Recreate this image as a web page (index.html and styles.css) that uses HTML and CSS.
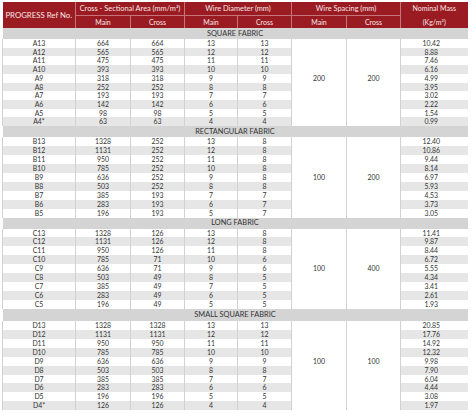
FILE: index.html
```html
<!DOCTYPE html>
<html>
<head>
<meta charset="utf-8">
<link rel="stylesheet" href="styles.css">
</head>
<body>
<div class="wrap">
<table class="mesh">
<colgroup>
<col class="c1"><col class="c2"><col class="c3"><col class="c4"><col class="c5"><col class="c6"><col class="c7"><col class="c8">
</colgroup>
<thead>
<tr class="h1">
<th rowspan="2" class="ref">PROGRESS Ref No.</th>
<th colspan="2" class="grp">Cross - Sectional Area (mm/m²)</th>
<th colspan="2" class="grp">Wire Diameter (mm)</th>
<th colspan="2" class="grp">Wire Spacing (mm)</th>
<th rowspan="2" class="nm"><div class="nm1">Nominal Mass</div><div class="nm2">(Kg/m²)</div></th>
</tr>
<tr class="h2">
<th>Main</th><th>Cross</th><th>Main</th><th>Cross</th><th>Main</th><th>Cross</th>
</tr>
</thead>
<tbody class="sec sa">
<tr class="band"><td colspan="8">SQUARE FABRIC</td></tr>
<tr><td>A13</td><td>664</td><td>664</td><td>13</td><td>13</td><td class="sp"></td><td class="sp"></td><td class="m">10.42</td></tr>
<tr class="g"><td>A12</td><td>565</td><td>565</td><td>12</td><td>12</td><td class="sp"></td><td class="sp"></td><td class="m">8.88</td></tr>
<tr><td>A11</td><td>475</td><td>475</td><td>11</td><td>11</td><td class="sp"></td><td class="sp"></td><td class="m">7.46</td></tr>
<tr class="g"><td>A10</td><td>393</td><td>393</td><td>10</td><td>10</td><td class="sp"></td><td class="sp"></td><td class="m">6.16</td></tr>
<tr><td>A9</td><td>318</td><td>318</td><td>9</td><td>9</td><td class="sp">200</td><td class="sp">200</td><td class="m">4.99</td></tr>
<tr class="g"><td>A8</td><td>252</td><td>252</td><td>8</td><td>8</td><td class="sp"></td><td class="sp"></td><td class="m">3.95</td></tr>
<tr><td>A7</td><td>193</td><td>193</td><td>7</td><td>7</td><td class="sp"></td><td class="sp"></td><td class="m">3.02</td></tr>
<tr class="g"><td>A6</td><td>142</td><td>142</td><td>6</td><td>6</td><td class="sp"></td><td class="sp"></td><td class="m">2.22</td></tr>
<tr><td>A5</td><td>98</td><td>98</td><td>5</td><td>5</td><td class="sp"></td><td class="sp"></td><td class="m">1.54</td></tr>
<tr class="g"><td>A4*</td><td>63</td><td>63</td><td>4</td><td>4</td><td class="sp"></td><td class="sp"></td><td class="m">0.99</td></tr>
</tbody>
<tbody class="sec sb">
<tr class="band"><td colspan="8">RECTANGULAR FABRIC</td></tr>
<tr><td>B13</td><td>1328</td><td>252</td><td>13</td><td>8</td><td class="sp"></td><td class="sp"></td><td class="m">12.40</td></tr>
<tr class="g"><td>B12</td><td>1131</td><td>252</td><td>12</td><td>8</td><td class="sp"></td><td class="sp"></td><td class="m">10.86</td></tr>
<tr><td>B11</td><td>950</td><td>252</td><td>11</td><td>8</td><td class="sp"></td><td class="sp"></td><td class="m">9.44</td></tr>
<tr class="g"><td>B10</td><td>785</td><td>252</td><td>10</td><td>8</td><td class="sp"></td><td class="sp"></td><td class="m">8.14</td></tr>
<tr><td>B9</td><td>636</td><td>252</td><td>9</td><td>8</td><td class="sp">100</td><td class="sp">200</td><td class="m">6.97</td></tr>
<tr class="g"><td>B8</td><td>503</td><td>252</td><td>8</td><td>8</td><td class="sp"></td><td class="sp"></td><td class="m">5.93</td></tr>
<tr><td>B7</td><td>385</td><td>193</td><td>7</td><td>7</td><td class="sp"></td><td class="sp"></td><td class="m">4.53</td></tr>
<tr class="g"><td>B6</td><td>283</td><td>193</td><td>6</td><td>7</td><td class="sp"></td><td class="sp"></td><td class="m">3.73</td></tr>
<tr><td>B5</td><td>196</td><td>193</td><td>5</td><td>7</td><td class="sp"></td><td class="sp"></td><td class="m">3.05</td></tr>
</tbody>
<tbody class="sec sc">
<tr class="band"><td colspan="8">LONG FABRIC</td></tr>
<tr><td>C13</td><td>1328</td><td>126</td><td>13</td><td>8</td><td class="sp"></td><td class="sp"></td><td class="m">11.41</td></tr>
<tr class="g"><td>C12</td><td>1131</td><td>126</td><td>12</td><td>8</td><td class="sp"></td><td class="sp"></td><td class="m">9.87</td></tr>
<tr><td>C11</td><td>950</td><td>126</td><td>11</td><td>8</td><td class="sp"></td><td class="sp"></td><td class="m">8.44</td></tr>
<tr class="g"><td>C10</td><td>785</td><td>71</td><td>10</td><td>6</td><td class="sp"></td><td class="sp"></td><td class="m">6.72</td></tr>
<tr><td>C9</td><td>636</td><td>71</td><td>9</td><td>6</td><td class="sp">100</td><td class="sp">400</td><td class="m">5.55</td></tr>
<tr class="g"><td>C8</td><td>503</td><td>49</td><td>8</td><td>5</td><td class="sp"></td><td class="sp"></td><td class="m">4.34</td></tr>
<tr><td>C7</td><td>385</td><td>49</td><td>7</td><td>5</td><td class="sp"></td><td class="sp"></td><td class="m">3.41</td></tr>
<tr class="g"><td>C6</td><td>283</td><td>49</td><td>6</td><td>5</td><td class="sp"></td><td class="sp"></td><td class="m">2.61</td></tr>
<tr><td>C5</td><td>196</td><td>49</td><td>5</td><td>5</td><td class="sp"></td><td class="sp"></td><td class="m">1.93</td></tr>
</tbody>
<tbody class="sec sd">
<tr class="band"><td colspan="8">SMALL SQUARE FABRIC</td></tr>
<tr><td>D13</td><td>1328</td><td>1328</td><td>13</td><td>13</td><td class="sp"></td><td class="sp"></td><td class="m">20.85</td></tr>
<tr class="g"><td>D12</td><td>1131</td><td>1131</td><td>12</td><td>12</td><td class="sp"></td><td class="sp"></td><td class="m">17.76</td></tr>
<tr><td>D11</td><td>950</td><td>950</td><td>11</td><td>11</td><td class="sp"></td><td class="sp"></td><td class="m">14.92</td></tr>
<tr class="g"><td>D10</td><td>785</td><td>785</td><td>10</td><td>10</td><td class="sp"></td><td class="sp"></td><td class="m">12.32</td></tr>
<tr><td>D9</td><td>636</td><td>636</td><td>9</td><td>9</td><td class="sp">100</td><td class="sp">100</td><td class="m">9.98</td></tr>
<tr class="g"><td>D8</td><td>503</td><td>503</td><td>8</td><td>8</td><td class="sp"></td><td class="sp"></td><td class="m">7.90</td></tr>
<tr><td>D7</td><td>385</td><td>385</td><td>7</td><td>7</td><td class="sp"></td><td class="sp"></td><td class="m">6.04</td></tr>
<tr class="g"><td>D6</td><td>283</td><td>283</td><td>6</td><td>6</td><td class="sp"></td><td class="sp"></td><td class="m">4.44</td></tr>
<tr><td>D5</td><td>196</td><td>196</td><td>5</td><td>5</td><td class="sp"></td><td class="sp"></td><td class="m">3.08</td></tr>
<tr class="g"><td>D4*</td><td>126</td><td>126</td><td>4</td><td>4</td><td class="sp"></td><td class="sp"></td><td class="m">1.97</td></tr>
</tbody>
</table>
</div>
</body>
</html>
```
FILE: styles.css
```css
html, body {
  margin: 0;
  padding: 0;
  background: #ffffff;
}
.wrap {
  padding: 2px 0 0 2px;
}
.mesh {
  border-collapse: collapse;
  table-layout: fixed;
  width: 465px;
  font-family: Lato, "Liberation Sans", sans-serif;
  color: #333333;
}
.c1 { width: 73px; }
.c2 { width: 55px; }
.c3 { width: 54px; }
.c4 { width: 53px; }
.c5 { width: 54px; }
.c6 { width: 55px; }
.c7 { width: 54px; }
.c8 { width: 67px; }

.mesh th, .mesh td {
  padding: 0;
  text-align: center;
  white-space: nowrap;
  overflow: hidden;
}
.mesh thead th {
  background: #9b1b22;
  color: #f6e6e6;
  font-weight: normal;
  font-size: 7.4px;
  border-left: 1px solid #c4747a;
}
.mesh thead th.ref {
  border-left: none;
  font-size: 7.8px;
}
.mesh .h1 th {
  height: 13px;
  line-height: 13px;
}
.mesh .h1 th.grp {
  border-bottom: 1px solid #c4747a;
}
.mesh .h2 th {
  height: 12px;
  line-height: 12px;
  font-size: 7px;
}
.mesh th.nm {
  vertical-align: top;
  font-size: 7px;
}
.nm1 {
  height: 13px;
  line-height: 13px;
}
.nm2 {
  line-height: 12px;
  padding-top: 1px;
}

.mesh tbody td {
  height: 8.8px;
  line-height: 8.8px;
  font-size: 6.9px;
  border-left: 1px solid #d2d2d2;
  background: #ffffff;
}
.mesh tbody.sa td { height: 8.7px; line-height: 8.7px; }
.mesh tbody.sb td { height: 9px; line-height: 9px; }
.mesh tbody.sc td { height: 8.95px; line-height: 8.95px; }
.mesh tbody.sd td { height: 8.9px; line-height: 8.9px; }

.mesh tbody tr.g td {
  background: #e6e6e6;
}
.mesh tbody tr.g td.sp {
  background: #ffffff;
}
.mesh tbody td.m {
  padding-right: 6px;
}
.mesh tbody tr.band td {
  height: 11px;
  line-height: 11px;
  background: #d4d4d4;
  font-size: 7.4px;
  color: #333333;
  border-left: none;
}
.mesh tbody.sc tr.band td { height: 10.5px; line-height: 10.5px; }
.mesh tbody.sd tr.band td { height: 12px; line-height: 12px; }
```
